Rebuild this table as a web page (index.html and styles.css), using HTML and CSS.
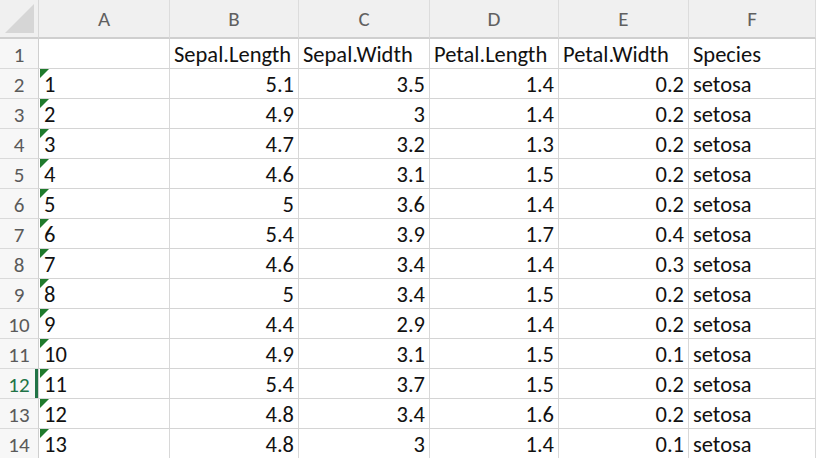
FILE: index.html
```html
<!DOCTYPE html>
<html>
<head>
<meta charset="utf-8">
<link rel="stylesheet" href="styles.css">
</head>
<body>
<div class="sheet" id="sheet">
  <div class="corner"><span class="corner-tri"></span></div>
  <div class="colhead">A</div>
  <div class="colhead">B</div>
  <div class="colhead">C</div>
  <div class="colhead">D</div>
  <div class="colhead">E</div>
  <div class="colhead">F</div>

  <div class="rowhead">1</div>
  <div class="cell"></div>
  <div class="cell">Sepal.Length</div>
  <div class="cell">Sepal.Width</div>
  <div class="cell">Petal.Length</div>
  <div class="cell">Petal.Width</div>
  <div class="cell">Species</div>
</div>
<script src="app.js"></script>
</body>
</html>
```
FILE: app.js
```js
var data = [
  [1, "5.1", "3.5", "1.4", "0.2"],
  [2, "4.9", "3", "1.4", "0.2"],
  [3, "4.7", "3.2", "1.3", "0.2"],
  [4, "4.6", "3.1", "1.5", "0.2"],
  [5, "5", "3.6", "1.4", "0.2"],
  [6, "5.4", "3.9", "1.7", "0.4"],
  [7, "4.6", "3.4", "1.4", "0.3"],
  [8, "5", "3.4", "1.5", "0.2"],
  [9, "4.4", "2.9", "1.4", "0.2"],
  [10, "4.9", "3.1", "1.5", "0.1"],
  [11, "5.4", "3.7", "1.5", "0.2"],
  [12, "4.8", "3.4", "1.6", "0.2"],
  [13, "4.8", "3", "1.4", "0.1"]
];
var sheet = document.getElementById("sheet");
data.forEach(function (r, i) {
  var rowNum = i + 2;
  var h = document.createElement("div");
  h.className = "rowhead" + (rowNum === 12 ? " selected" : "");
  h.textContent = rowNum;
  sheet.appendChild(h);
  var a = document.createElement("div");
  a.className = "cell text-num";
  a.innerHTML = '<span class="flag"></span>' + r[0];
  sheet.appendChild(a);
  for (var k = 1; k < 5; k++) {
    var c = document.createElement("div");
    c.className = "cell num";
    c.textContent = r[k];
    sheet.appendChild(c);
  }
  var s = document.createElement("div");
  s.className = "cell";
  s.textContent = "setosa";
  sheet.appendChild(s);
});
```
FILE: styles.css
```css
html, body {
  margin: 0;
  padding: 0;
  background: #ffffff;
  overflow: hidden;
}
.sheet {
  display: grid;
  grid-template-columns: 39px 131px 129px 131px 129px 130px 1fr;
  grid-auto-rows: 30px;
  grid-template-rows: 39px;
  font-family: Carlito, Calibri, "Open Sans", sans-serif;
  width: 816px;
}
.corner {
  position: relative;
  background: #f0f0f0;
  border-right: 1px solid #d8d8d8;
  border-bottom: 2px solid #cfcfcf;
}
.corner-tri {
  position: absolute;
  right: 4px;
  bottom: 4px;
  width: 0;
  height: 0;
  border-left: 29px solid transparent;
  border-bottom: 29px solid #d6d6d6;
}
.colhead {
  background: #f0f0f0;
  border-right: 1px solid #dcdcdc;
  border-bottom: 2px solid #cfcfcf;
  color: #606060;
  font-size: 21px;
  display: flex;
  align-items: center;
  justify-content: center;
}
.rowhead {
  position: relative;
  background: #f7f7f7;
  border-right: 1px solid #cfcfcf;
  border-bottom: 1px solid #dadada;
  color: #5a5a5a;
  font-size: 21px;
  display: flex;
  align-items: center;
  justify-content: center;
  padding-top: 2px;
  box-sizing: border-box;
}
.rowhead.selected {
  color: #217346;
  box-shadow: inset -3px 0 0 #217346;
}
.cell {
  position: relative;
  border-right: 1px solid #d8d8d8;
  border-bottom: 1px solid #d4d4d4;
  color: #111111;
  font-size: 22.5px;
  display: flex;
  align-items: center;
  padding: 2px 4px 0 4px;
  white-space: nowrap;
  overflow: hidden;
  box-sizing: border-box;
}
.cell.num {
  justify-content: flex-end;
}
.cell.text-num {
  padding-left: 5px;
}
.flag {
  position: absolute;
  left: 1px;
  top: 0;
  width: 0;
  height: 0;
  border-top: 9px solid #1f7a2c;
  border-right: 9px solid transparent;
}
```
